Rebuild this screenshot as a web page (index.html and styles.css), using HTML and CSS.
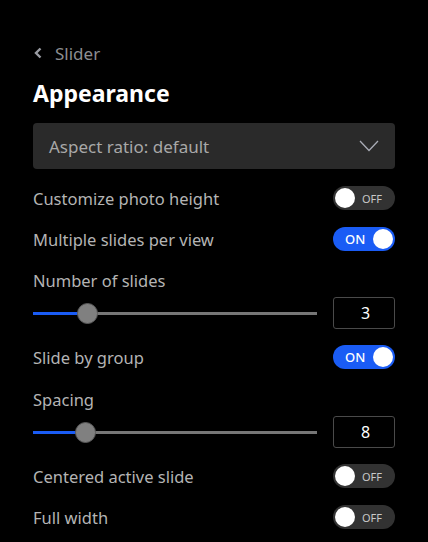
FILE: index.html
```html
<!DOCTYPE html>
<html>
<head>
<meta charset="utf-8">
<link rel="stylesheet" href="styles.css">
</head>
<body>
<div class="panel">
  <div class="back">
    <svg class="back-icon" width="10" height="12" viewBox="0 0 10 12"><path d="M7.5 1.5 L3 6 L7.5 10.5" fill="none" stroke="#9a9ca3" stroke-width="2.4"/></svg>
    <span>Slider</span>
  </div>
  <h1 class="title">Appearance</h1>
  <div class="dropdown">
    <span>Aspect ratio: default</span>
    <svg width="20" height="12" viewBox="0 0 20 12"><path d="M1 1 L10 10.5 L19 1" fill="none" stroke="#a9acb6" stroke-width="1.3"/></svg>
  </div>
  <div class="row r1">
    <span class="label">Customize photo height</span>
    <div class="toggle off"><span class="knob"></span><span class="txt">OFF</span></div>
  </div>
  <div class="row r2">
    <span class="label">Multiple slides per view</span>
    <div class="toggle on"><span class="txt">ON</span><span class="knob"></span></div>
  </div>
  <div class="label-row r3">Number of slides</div>
  <div class="slider-row">
    <div class="track"><div class="fill" style="width:54px"></div><div class="thumb" style="left:54px"></div></div>
    <div class="num">3</div>
  </div>
  <div class="row r4">
    <span class="label">Slide by group</span>
    <div class="toggle on"><span class="txt">ON</span><span class="knob"></span></div>
  </div>
  <div class="label-row r5">Spacing</div>
  <div class="slider-row">
    <div class="track"><div class="fill" style="width:52px"></div><div class="thumb" style="left:52px"></div></div>
    <div class="num">8</div>
  </div>
  <div class="row r6">
    <span class="label">Centered active slide</span>
    <div class="toggle off"><span class="knob"></span><span class="txt">OFF</span></div>
  </div>
  <div class="row r7">
    <span class="label">Full width</span>
    <div class="toggle off"><span class="knob"></span><span class="txt">OFF</span></div>
  </div>
</div>
</body>
</html>
```
FILE: styles.css
```css
* { box-sizing: border-box; }
html, body { margin: 0; background: #000; }
body { font-family: "Noto Sans", "Open Sans", sans-serif; color: #b4b4b4; width: 428px; height: 542px; overflow: hidden; }
.panel { padding: 41px 33px 0 33px; display: flex; flex-direction: column; }
.back { height: 24px; display: flex; align-items: center; gap: 12px; font-size: 17px; color: #8c8d91; }
.back-icon { display: block; }
.title { margin: 13px 0 0 0; height: 30px; line-height: 30px; font-size: 23px; font-weight: 700; color: #fff; }
.dropdown { margin-top: 15px; height: 46px; background: #2a2a2a; border-radius: 4px; display: flex; align-items: center; justify-content: space-between; padding: 0 16px 0 16px; font-size: 17px; color: #a8a8a8; }
.row { height: 24px; display: flex; align-items: center; justify-content: space-between; font-size: 16.5px; }
.r1 { margin-top: 17px; }
.r2 { margin-top: 17px; }
.r3 { margin-top: 18px; }
.r4 { margin-top: 16px; }
.r5 { margin-top: 19px; }
.r6 { margin-top: 16px; }
.r7 { margin-top: 17px; }
.label-row { height: 24px; line-height: 24px; font-size: 16.5px; }
.toggle { width: 62px; height: 24px; border-radius: 12px; display: flex; align-items: center; padding: 0 2px; }
.toggle.off { background: #323232; }
.toggle.on { background: #1a5cf5; justify-content: space-between; padding-left: 12px; }
.knob { width: 20px; height: 20px; border-radius: 50%; background: #fff; }
.toggle.off .txt { font-size: 11px; color: #c8c8c8; margin-left: 7px; }
.toggle.on .txt { font-size: 13px; color: #fff; font-weight: 500; }
.slider-row { margin-top: 4px; height: 32px; display: flex; align-items: center; justify-content: space-between; }
.track { position: relative; width: 284px; height: 3px; background: #767676; }
.fill { position: absolute; left: 0; top: 0; height: 3px; background: #1a5cf5; }
.thumb { position: absolute; top: -9px; width: 21px; height: 21px; margin-left: -10px; border-radius: 50%; background: #808080; border: 1px solid #5a5a5a; }
.num { width: 62px; height: 32px; border: 1px solid #4a4a4a; border-radius: 3px; background: #000; color: #fff; font-size: 16px; display: flex; align-items: center; justify-content: center; padding-left: 3px; }
```
